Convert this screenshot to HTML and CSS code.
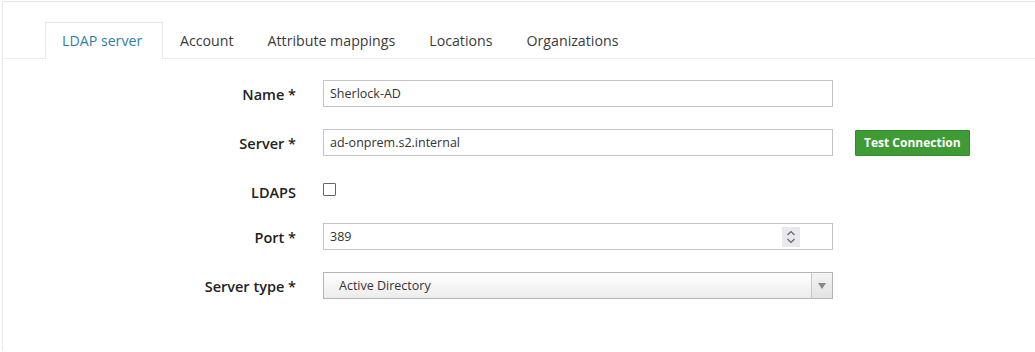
FILE: index.html
```html
<!DOCTYPE html>
<html>
<head>
<meta charset="utf-8">
<link rel="stylesheet" href="styles.css">
</head>
<body>
<div class="frame">
  <ul class="tabs">
    <li class="tab active">LDAP server</li>
    <li class="tab">Account</li>
    <li class="tab">Attribute mappings</li>
    <li class="tab">Locations</li>
    <li class="tab">Organizations</li>
  </ul>
  <form class="form">
    <label class="label">Name *</label>
    <div class="field"><input class="input" type="text" value="Sherlock-AD"></div>
    <div></div>

    <label class="label">Server *</label>
    <div class="field"><input class="input" type="text" value="ad-onprem.s2.internal"></div>
    <div class="extra"><button type="button" class="btn-success">Test Connection</button></div>

    <label class="label ldaps">LDAPS</label>
    <div class="field check-field"><span class="checkbox"></span></div>
    <div></div>

    <label class="label">Port *</label>
    <div class="field number-field">
      <div class="input fake">389</div>
      <span class="spinner">
        <svg width="10" height="16" viewBox="0 0 10 16"><path d="M1.5 6 L5 2.5 L8.5 6" fill="none" stroke="#666" stroke-width="1.2"/><path d="M1.5 10 L5 13.5 L8.5 10" fill="none" stroke="#666" stroke-width="1.2"/></svg>
      </span>
    </div>
    <div></div>

    <label class="label">Server type *</label>
    <div class="field">
      <div class="select">
        <span class="select-text">Active Directory</span>
        <span class="select-arrow"><svg width="8" height="6" viewBox="0 0 8 6"><path d="M0 0 L8 0 L4 6 Z" fill="#888"/></svg></span>
      </div>
    </div>
    <div></div>
  </form>
</div>
</body>
</html>
```
FILE: styles.css
```css
html, body {
  margin: 0;
  padding: 0;
  background: #fff;
}
body {
  font-family: "Open Sans", "Noto Sans", sans-serif;
  color: #333;
  width: 1035px;
  height: 352px;
  overflow: hidden;
}
.frame {
  margin: 1px 0 0 2px;
  border-top: 1px solid #e6e6e6;
  border-left: 1px solid #e6e6e6;
  height: 350px;
  box-sizing: border-box;
}
.tabs {
  list-style: none;
  margin: 20px 0 0 0;
  padding: 0 0 0 42px;
  display: flex;
  border-bottom: 1px solid #ececec;
  height: 36px;
}
.tab {
  padding: 0 16px;
  font-size: 14.2px;
  color: #3b3b3b;
  line-height: 36px;
  border: 1px solid transparent;
  border-bottom: none;
  box-sizing: border-box;
  height: 37px;
}
.tab.active {
  padding: 0 16px 0 16px;
  color: #2f7fa8;
  border-color: #e6e6e6;
  background: #fff;
  min-width: 118px;
}
.form {
  display: grid;
  grid-template-columns: 293px 510px auto;
  grid-template-rows: 27px 27px 23px 27px 27px;
  column-gap: 27px;
  row-gap: 22px;
  margin-top: 21px;
  align-items: center;
}
.label {
  text-align: right;
  font-weight: 600;
  font-size: 14.5px;
  line-height: 20px;
  color: #222;
  padding-top: 2px;
}
.label.ldaps {
  padding-top: 6px;
}
.field {
  height: 27px;
  display: flex;
  align-items: center;
}
.input {
  width: 100%;
  height: 27px;
  box-sizing: border-box;
  border: 1px solid #c4c4c4;
  font-family: "Open Sans", "Noto Sans", sans-serif;
  font-size: 12.5px;
  color: #333;
  padding: 0 6px;
  outline: none;
  background: #fff;
}
.input.fake {
  display: flex;
  align-items: center;
}
.check-field {
  height: 23px;
  align-items: center;
}
.checkbox {
  width: 11px;
  height: 11px;
  border: 1.5px solid #666;
  border-radius: 1px;
  background: #fff;
}
.number-field {
  position: relative;
}
.spinner {
  position: absolute;
  left: 459px;
  top: 4px;
  width: 18px;
  height: 20px;
  background: #e8e8ee;
  display: flex;
  align-items: center;
  justify-content: center;
}
.select {
  width: 100%;
  height: 27px;
  box-sizing: border-box;
  border: 1px solid #b5b5b5;
  background: linear-gradient(#ffffff, #ececec);
  display: flex;
  align-items: center;
  font-size: 12.5px;
  color: #333;
}
.select-text {
  flex: 1;
  padding-left: 15px;
}
.select-arrow {
  width: 20px;
  height: 100%;
  border-left: 1px solid #c8c8c8;
  display: flex;
  align-items: center;
  justify-content: center;
  background: linear-gradient(#f4f4f4, #e2e2e2);
}
.extra {
  display: flex;
  align-items: center;
}
.btn-success {
  margin-left: -5px;
  height: 26px;
  padding: 0 8px;
  background: #3f9c35;
  border: 1px solid #37892e;
  color: #fff;
  font-family: "Open Sans", "Noto Sans", sans-serif;
  font-weight: 700;
  font-size: 12px;
  border-radius: 1px;
}
```
